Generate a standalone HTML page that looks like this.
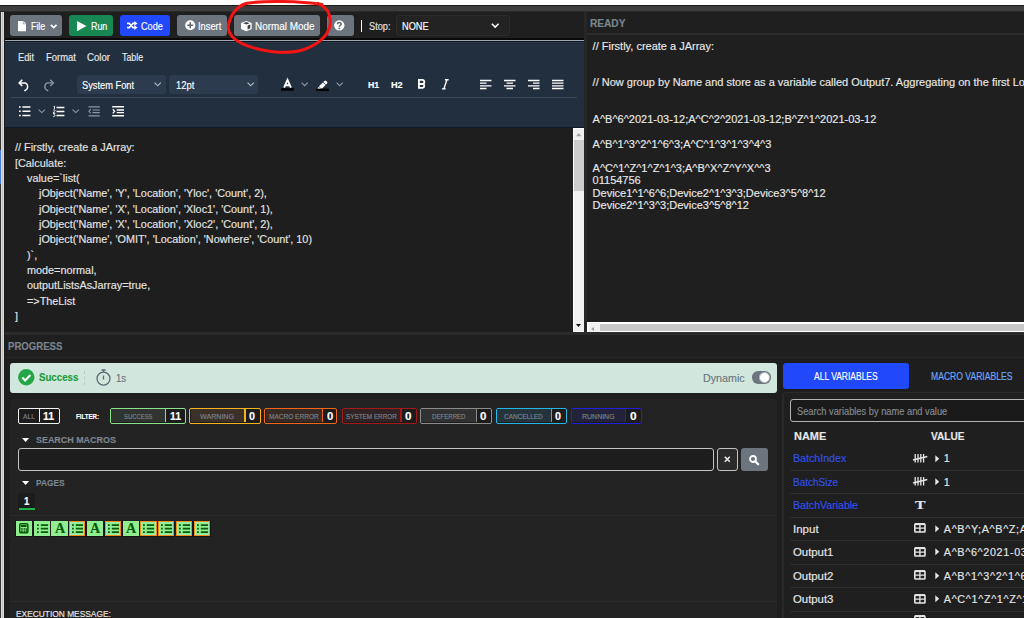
<!DOCTYPE html>
<html><head><meta charset="utf-8">
<style>
*{box-sizing:border-box;margin:0;padding:0}
html,body{width:1024px;height:618px;overflow:hidden;background:#1e1e1e;font-family:"Liberation Sans",sans-serif;color:#fff;position:relative}
.a{position:absolute}
.t{position:absolute;white-space:pre;line-height:1;-webkit-text-stroke:0.15px currentColor}
svg{display:block;overflow:visible}
</style></head><body>
<div class="a" style="left:0px;top:0px;width:1024px;height:5px;background:#fff;"></div>
<div class="a" style="left:0px;top:5px;width:1024px;height:1px;background:#1c1c1c;"></div>
<div class="a" style="left:0px;top:6px;width:1024px;height:5px;background:#3e3e3e;"></div>
<div class="a" style="left:0px;top:11px;width:1024px;height:1px;background:#2a2a2a;"></div>
<div class="a" style="left:0px;top:12px;width:1px;height:606px;background:#333;"></div>
<div class="a" style="left:1px;top:12px;width:1px;height:606px;background:#dcdcdc;"></div>
<div class="a" style="left:2px;top:12px;width:1px;height:606px;background:#c2c2c2;"></div>
<div class="a" style="left:3px;top:12px;width:1px;height:606px;background:#dcdcdc;"></div>
<div class="a" style="left:4px;top:12px;width:1px;height:606px;background:#1a1a1a;"></div>
<div class="a" style="left:0px;top:150px;width:1px;height:34px;background:#4a7ae8;"></div>
<div class="a" style="left:5px;top:12px;width:579px;height:26px;background:#1f1f1f;"></div>
<div class="a" style="left:5px;top:38px;width:579px;height:1.5px;background:#0a0a0a;"></div>
<div class="a" style="left:5px;top:39.5px;width:579px;height:1.5px;background:#9ea6ae;"></div>
<div class="a" style="left:5px;top:41px;width:579px;height:1px;background:#0b1322;"></div>
<div class="a" style="left:10px;top:15px;width:51.5px;height:21px;background:#6c757d;border-radius:3px"></div>
<svg class="a" style="left:18px;top:20.8px;" width="8" height="10.2" viewBox="0 0 8 10.2"><path d="M0 0H5.4L8 2.6V10.2H0Z" fill="#fff"/><path d="M5.2 0.3V2.8H7.7" fill="none" stroke="#8a9299" stroke-width="0.8"/></svg>
<div class="t" style="left:30.80px;top:22.00px;font-size:10.3px;color:#fff;transform:scaleX(0.856);transform-origin:0 0;">File</div>
<svg class="a" style="left:49.8px;top:23.6px;" width="7.4" height="4.6" viewBox="0 0 7.4 4.6"><path d="M0.9 0.9L3.7 3.6L6.5 0.9" stroke="#fff" stroke-width="1.8" fill="none"/></svg>
<div class="a" style="left:69px;top:15px;width:44px;height:21px;background:#198754;border-radius:3px"></div>
<svg class="a" style="left:77px;top:20.9px;" width="9.5" height="10.2" viewBox="0 0 9.5 10.2"><path d="M0 0L9.5 5.1L0 10.2Z" fill="#fff"/></svg>
<div class="t" style="left:90.80px;top:22.00px;font-size:10.3px;color:#fff;transform:scaleX(0.863);transform-origin:0 0;">Run</div>
<div class="a" style="left:120px;top:15px;width:49.5px;height:21px;background:#2148fb;border-radius:3px"></div>
<svg class="a" style="left:126.8px;top:21px;" width="10.6" height="9" viewBox="0 0 10.6 9"><path d="M0 2.4H2.2L6 6.6H7.8M0 6.6H2.2L6 2.4H7.8" stroke="#fff" stroke-width="1.6" fill="none"/><path d="M7.3 0L10.6 2.4L7.3 4.8ZM7.3 4.2L10.6 6.6L7.3 9Z" fill="#fff"/></svg>
<div class="t" style="left:141.10px;top:22.00px;font-size:10.3px;color:#fff;transform:scaleX(0.890);transform-origin:0 0;">Code</div>
<div class="a" style="left:176.5px;top:15px;width:50.5px;height:21px;background:#6c757d;border-radius:3px"></div>
<svg class="a" style="left:184.5px;top:20.2px;" width="10.5" height="10.5" viewBox="0 0 10.5 10.5"><circle cx="5.25" cy="5.25" r="5.1" fill="#fff"/><path d="M5.25 2.3V8.2M2.3 5.25H8.2" stroke="#5d666e" stroke-width="1.5"/></svg>
<div class="t" style="left:197.70px;top:22.00px;font-size:10.3px;color:#fff;transform:scaleX(0.901);transform-origin:0 0;">Insert</div>
<div class="a" style="left:234px;top:15px;width:86px;height:21px;background:#6c757d;border-radius:3px"></div>
<svg class="a" style="left:240.7px;top:20.6px;" width="10.7" height="10.2" viewBox="0 0 10.7 10.2"><path d="M5.35 0L10.7 2.1V8L5.35 10.2L0 8V2.1Z" fill="#fff"/><path d="M2.2 2.3L5.35 1.1L8.5 2.3L5.35 3.5Z" fill="#3a4148"/><path d="M6.6 4.6L9.3 3.5V7.2L6.6 8.4Z" fill="#3a4148"/></svg>
<div class="t" style="left:254.90px;top:22.00px;font-size:10.3px;color:#fff;transform:scaleX(0.961);transform-origin:0 0;">Normal Mode</div>
<div class="a" style="left:327px;top:15px;width:27px;height:21px;background:#6c757d;border-radius:3px"></div>
<svg class="a" style="left:333.8px;top:20.2px;" width="10.6" height="10.6" viewBox="0 0 10.5 10.5"><circle cx="5.25" cy="5.25" r="5.1" fill="#fff"/><path d="M3.4 4.1C3.4 2.1 7.1 2.1 7.1 4C7.1 5.3 5.25 5.3 5.25 6.6" stroke="#5d666e" stroke-width="1.5" fill="none"/><circle cx="5.25" cy="8.3" r="0.9" fill="#5d666e"/></svg>
<div class="a" style="left:361px;top:20px;width:1.3px;height:11.5px;background:#f4f4f4;"></div>
<div class="t" style="left:368.80px;top:22.00px;font-size:10.3px;color:#e6e6e6;transform:scaleX(0.894);transform-origin:0 0;">Stop:</div>
<div class="a" style="left:396px;top:15.3px;width:114px;height:21px;background:#232323;border-radius:3px;border:1px solid #2c2c2c"></div>
<div class="t" style="left:402.20px;top:22.00px;font-size:10.3px;color:#fff;transform:scaleX(0.894);transform-origin:0 0;">NONE</div>
<svg class="a" style="left:491px;top:23.3px;" width="8.4" height="5" viewBox="0 0 8.4 5"><path d="M0.8 0.8L4.2 4.1L7.6 0.8" stroke="#fff" stroke-width="1.5" fill="none"/></svg>
<div class="a" style="left:5px;top:42px;width:579px;height:85px;background:#222f3e;"></div>
<div class="a" style="left:5px;top:42px;width:579px;height:1px;background:#2a3746;"></div>
<div class="t" style="left:17.90px;top:53.00px;font-size:10.4px;color:#e8eaed;transform:scaleX(0.894);transform-origin:0 0;">Edit</div>
<div class="t" style="left:45.80px;top:53.00px;font-size:10.4px;color:#e8eaed;transform:scaleX(0.909);transform-origin:0 0;">Format</div>
<div class="t" style="left:87.30px;top:53.00px;font-size:10.4px;color:#e8eaed;transform:scaleX(0.926);transform-origin:0 0;">Color</div>
<div class="t" style="left:122.20px;top:53.00px;font-size:10.4px;color:#e8eaed;transform:scaleX(0.853);transform-origin:0 0;">Table</div>
<svg class="a" style="left:17.5px;top:78.5px;" width="12.5" height="12.2" viewBox="0 0 12.5 12.2"><path d="M4.3 0.7L1.1 3.9L4.3 7.1" stroke="#fff" stroke-width="1.5" fill="none"/><path d="M1.3 3.9H7.3A4.2 4.2 0 0 1 7.3 11.5H6.2" stroke="#fff" stroke-width="1.5" fill="none"/></svg>
<svg class="a" style="left:42.3px;top:78.5px;" width="12.5" height="12.2" viewBox="0 0 12.5 12.2"><path d="M8.2 0.7L11.4 3.9L8.2 7.1" stroke="#8f98a2" stroke-width="1.4" fill="none"/><path d="M11.2 3.9H5.2A4.2 4.2 0 0 0 5.2 11.5H6.3" stroke="#8f98a2" stroke-width="1.4" fill="none"/></svg>
<div class="a" style="left:77px;top:74.8px;width:89px;height:19px;background:#2c3b4d;border-radius:3px"></div>
<div class="t" style="left:82.10px;top:81.00px;font-size:10.3px;color:#fff;transform:scaleX(0.900);transform-origin:0 0;">System Font</div>
<svg class="a" style="left:154px;top:82.2px;" width="7.4" height="4.6" viewBox="0 0 7.4 4.6"><path d="M0.6 0.6L3.7 3.8L6.8 0.6" stroke="#b9c0c7" stroke-width="1.1" fill="none"/></svg>
<div class="a" style="left:169.3px;top:74.8px;width:89px;height:19px;background:#2c3b4d;border-radius:3px"></div>
<div class="t" style="left:175.70px;top:81.00px;font-size:10.3px;color:#fff;transform:scaleX(0.913);transform-origin:0 0;">12pt</div>
<svg class="a" style="left:246.5px;top:82.2px;" width="7.4" height="4.6" viewBox="0 0 7.4 4.6"><path d="M0.6 0.6L3.7 3.8L6.8 0.6" stroke="#b9c0c7" stroke-width="1.1" fill="none"/></svg>
<svg class="a" style="left:281px;top:79px;" width="13" height="12" viewBox="0 0 13 12"><path d="M3.1 8.6L6.5 0.9L9.9 8.6M4.5 6.2H8.5" stroke="#fff" stroke-width="1.9" fill="none"/><rect x="0" y="9.2" width="12.7" height="2.5" fill="#000"/></svg>
<svg class="a" style="left:301px;top:82px;" width="7.4" height="4.5" viewBox="0 0 7.4 4.5"><path d="M0.6 0.6L3.7 3.7L6.8 0.6" stroke="#8d99a6" stroke-width="1.1" fill="none"/></svg>
<svg class="a" style="left:316px;top:78.5px;" width="13" height="12.3" viewBox="0 0 13 12.3"><path d="M3 7.3L8.4 1.9A1.3 1.3 0 0 1 10.2 1.9L11 2.7A1.3 1.3 0 0 1 11 4.5L5.6 9.9Z" fill="#fff"/><path d="M7.2 3.2L9.8 5.8" stroke="#222f3e" stroke-width="0.8"/><path d="M2.8 7.8L5.1 10.1L3.8 10.6H0.8Z" fill="#fff"/><rect x="0.2" y="9.6" width="12.6" height="2.5" fill="#000"/></svg>
<svg class="a" style="left:336px;top:82px;" width="7.4" height="4.5" viewBox="0 0 7.4 4.5"><path d="M0.6 0.6L3.7 3.7L6.8 0.6" stroke="#8d99a6" stroke-width="1.1" fill="none"/></svg>
<div class="t" style="left:367.80px;top:80.00px;font-size:9.9px;font-weight:bold;color:#fff;transform:scaleX(0.887);transform-origin:0 0;">H1</div>
<div class="t" style="left:391.30px;top:80.00px;font-size:9.9px;font-weight:bold;color:#fff;transform:scaleX(0.927);transform-origin:0 0;">H2</div>
<svg class="a" style="left:417.5px;top:79.4px;" width="8.2" height="9.7" viewBox="0 0 8.2 9.7"><path d="M0.9 0.9H4.3A2.05 2.05 0 0 1 4.3 5H0.9ZM0.9 4.8H4.7A2.05 2.05 0 0 1 4.7 8.8H0.9Z" stroke="#fff" stroke-width="1.8" fill="none"/></svg>
<svg class="a" style="left:442px;top:79px;" width="6.6" height="10.6" viewBox="0 0 6.6 10.6"><path d="M2.9 0.7H6.6M0 9.9H3.7M4.9 0.7L1.9 9.9" stroke="#fff" stroke-width="1.4" fill="none"/></svg>
<svg class="a" style="left:479.7px;top:79px;" width="11.5" height="11" viewBox="0 0 11.5 11"><path d="M0 1.5H11.5M0 6.8H11.5M0 4.2H6.5M0 9.5H6.5" stroke="#fff" stroke-width="1.3"/></svg>
<svg class="a" style="left:503.8px;top:79px;" width="11.5" height="11" viewBox="0 0 11.5 11"><path d="M0 1.5H11.5M0 6.8H11.5M2.5 4.2H9M2.5 9.5H9" stroke="#fff" stroke-width="1.3"/></svg>
<svg class="a" style="left:527.9px;top:79px;" width="11.5" height="11" viewBox="0 0 11.5 11"><path d="M0 1.5H11.5M0 6.8H11.5M5 4.2H11.5M5 9.5H11.5" stroke="#fff" stroke-width="1.3"/></svg>
<svg class="a" style="left:552px;top:79px;" width="11.5" height="11" viewBox="0 0 11.5 11"><path d="M0 1.5H11.5M0 6.8H11.5M0 4.2H11.5M0 9.5H11.5" stroke="#fff" stroke-width="1.3"/></svg>
<div class="a" style="left:11px;top:96.6px;width:566px;height:1px;background:#3b4a5a;"></div>
<svg class="a" style="left:18.6px;top:105.8px;" width="11.4" height="10.5" viewBox="0 0 11.4 10.5"><path d="M0 1H1.7M0 5.25H1.7M0 9.5H1.7" stroke="#fff" stroke-width="1.7"/><path d="M3.4 1H11.4M3.4 5.25H11.4M3.4 9.5H11.4" stroke="#fff" stroke-width="1.4"/></svg>
<svg class="a" style="left:37.5px;top:109.3px;" width="7.6" height="4.3" viewBox="0 0 7.6 4.3"><path d="M0.6 0.6L3.8 3.6L7 0.6" stroke="#8d99a6" stroke-width="1.1" fill="none"/></svg>
<svg class="a" style="left:52.9px;top:105.5px;" width="11.4" height="11" viewBox="0 0 11.4 11"><path d="M0.7 0.5L1.5 0.1V3M0.2 4.3C0.5 3.6 2 3.6 2 4.5C2 5.2 0.6 5.8 0.2 6.9H2.1M0.2 7.6H2L1 8.7C2.4 8.6 2.4 10.8 0.2 10.5" stroke="#fff" stroke-width="0.9" fill="none"/><path d="M3.5 1.4H11.4M3.5 5.5H11.4M3.5 9.6H11.4" stroke="#fff" stroke-width="1.5"/></svg>
<svg class="a" style="left:72.3px;top:109.3px;" width="7.6" height="4.3" viewBox="0 0 7.6 4.3"><path d="M0.6 0.6L3.8 3.6L7 0.6" stroke="#8d99a6" stroke-width="1.1" fill="none"/></svg>
<svg class="a" style="left:88px;top:105.8px;" width="11.8" height="10.5" viewBox="0 0 11.8 10.5"><path d="M0.5 0.8H11.8M4.5 4H11.8M4.5 6.6H11.8M0.5 9.8H11.8" stroke="#8f98a2" stroke-width="1.2"/><path d="M2.8 3.2L0.9 5.3L2.8 7.4" stroke="#8f98a2" stroke-width="1.1" fill="none"/></svg>
<svg class="a" style="left:111.6px;top:105.8px;" width="12" height="10.5" viewBox="0 0 12 10.5"><path d="M0.2 0.8H12M4.7 4H12M4.7 6.6H12M0.2 9.8H12" stroke="#fff" stroke-width="1.4"/><path d="M0.8 3.2L2.7 5.3L0.8 7.4" stroke="#fff" stroke-width="1.3" fill="none"/></svg>
<div class="a" style="left:5px;top:127px;width:579px;height:1.2px;background:#111a24;"></div>
<div class="t" style="left:15.00px;top:142.00px;font-size:11px;color:#e4e4e4;transform:scaleX(0.985);transform-origin:0 0;">// Firstly, create a JArray:</div>
<div class="t" style="left:15.00px;top:158.00px;font-size:11px;color:#e4e4e4;transform:scaleX(0.985);transform-origin:0 0;">[Calculate:</div>
<div class="t" style="left:27.00px;top:173.00px;font-size:11px;color:#e4e4e4;transform:scaleX(0.985);transform-origin:0 0;">value=`list(</div>
<div class="t" style="left:39.00px;top:188.00px;font-size:11px;color:#e4e4e4;transform:scaleX(0.985);transform-origin:0 0;">jObject('Name', 'Y', 'Location', 'Yloc', 'Count', 2),</div>
<div class="t" style="left:39.00px;top:204.00px;font-size:11px;color:#e4e4e4;transform:scaleX(0.985);transform-origin:0 0;">jObject('Name', 'X', 'Location', 'Xloc1', 'Count', 1),</div>
<div class="t" style="left:39.00px;top:219.00px;font-size:11px;color:#e4e4e4;transform:scaleX(0.985);transform-origin:0 0;">jObject('Name', 'X', 'Location', 'Xloc2', 'Count', 2),</div>
<div class="t" style="left:39.00px;top:234.00px;font-size:11px;color:#e4e4e4;transform:scaleX(0.985);transform-origin:0 0;">jObject('Name', 'OMIT', 'Location', 'Nowhere', 'Count', 10)</div>
<div class="t" style="left:27.00px;top:250.00px;font-size:11px;color:#e4e4e4;transform:scaleX(0.985);transform-origin:0 0;">)`,</div>
<div class="t" style="left:27.00px;top:265.00px;font-size:11px;color:#e4e4e4;transform:scaleX(0.985);transform-origin:0 0;">mode=normal,</div>
<div class="t" style="left:27.00px;top:280.00px;font-size:11px;color:#e4e4e4;transform:scaleX(0.985);transform-origin:0 0;">outputListsAsJarray=true,</div>
<div class="t" style="left:27.00px;top:296.00px;font-size:11px;color:#e4e4e4;transform:scaleX(0.985);transform-origin:0 0;">=&gt;TheList</div>
<div class="t" style="left:15.00px;top:311.00px;font-size:11px;color:#e4e4e4;transform:scaleX(0.985);transform-origin:0 0;">]</div>
<div class="a" style="left:572.8px;top:128px;width:11.4px;height:204px;background:#fff;"></div>
<div class="a" style="left:574px;top:129px;width:9.5px;height:202px;background:#f0f0f0;"></div>
<div class="a" style="left:574px;top:140px;width:9.5px;height:50.5px;background:#cdcdcd;"></div>
<svg class="a" style="left:575.8px;top:132.5px;" width="5.5" height="3.2" viewBox="0 0 5.5 3.2"><path d="M0 3.2L2.75 0L5.5 3.2Z" fill="#a3a3a3"/></svg>
<svg class="a" style="left:576px;top:324px;" width="5" height="3" viewBox="0 0 5 3"><path d="M0 0L2.5 3L5 0Z" fill="#111"/></svg>
<div class="a" style="left:584px;top:12px;width:3px;height:320px;background:#272727;"></div>
<div class="a" style="left:587px;top:12px;width:437px;height:20.5px;background:#1f1f1f;"></div>
<div class="t" style="left:589.60px;top:18.00px;font-size:10.8px;font-weight:bold;color:#7c858f;transform:scaleX(0.937);transform-origin:0 0;">READY</div>
<div class="a" style="left:587px;top:32.5px;width:437px;height:2px;background:#2b2b2b;"></div>
<div class="a" style="left:587px;top:34.5px;width:437px;height:288px;background:#1f1f1f;"></div>
<div class="t" style="left:592.60px;top:41.00px;font-size:11px;color:#e8e8e8;">// Firstly, create a JArray:</div>
<div class="t" style="left:592.60px;top:77.00px;font-size:11px;color:#e8e8e8;">// Now group by Name and store as a variable called Output7. Aggregating on the first Location</div>
<div class="t" style="left:592.60px;top:114.00px;font-size:11px;color:#e8e8e8;">A^B^6^2021-03-12;A^C^2^2021-03-12;B^Z^1^2021-03-12</div>
<div class="t" style="left:592.60px;top:139.00px;font-size:11px;color:#e8e8e8;">A^B^1^3^2^1^6^3;A^C^1^3^1^3^4^3</div>
<div class="t" style="left:592.60px;top:163.00px;font-size:11px;color:#e8e8e8;">A^C^1^Z^1^Z^1^3;A^B^X^Z^Y^X^^3</div>
<div class="t" style="left:592.60px;top:175.00px;font-size:11px;color:#e8e8e8;">01154756</div>
<div class="t" style="left:592.60px;top:188.00px;font-size:11px;color:#e8e8e8;">Device1^1^6^6;Device2^1^3^3;Device3^5^8^12</div>
<div class="t" style="left:592.60px;top:200.00px;font-size:11px;color:#e8e8e8;">Device2^1^3^3;Device3^5^8^12</div>
<div class="a" style="left:587px;top:322px;width:437px;height:10px;background:#fff;"></div>
<div class="a" style="left:588.5px;top:323px;width:11px;height:9px;background:#f0f0f0;"></div>
<div class="a" style="left:599.5px;top:324px;width:425px;height:7px;background:#c8c8c8;"></div>
<svg class="a" style="left:591.2px;top:326.5px;" width="3" height="4" viewBox="0 0 3 4"><path d="M3 0L0 2L3 4Z" fill="#a0a0a0"/></svg>
<div class="a" style="left:5px;top:332px;width:1019px;height:3px;background:#2b2b2b;"></div>
<div class="a" style="left:5px;top:335px;width:1019px;height:22px;background:#1f1f1f;"></div>
<div class="t" style="left:7.50px;top:341.00px;font-size:10.9px;font-weight:bold;color:#7c858f;transform:scaleX(0.881);transform-origin:0 0;">PROGRESS</div>
<div class="a" style="left:5px;top:356.8px;width:1019px;height:1.4px;background:#262626;"></div>
<div class="a" style="left:10px;top:363px;width:767.2px;height:30.3px;background:#d1e7dd;border-radius:3px"></div>
<svg class="a" style="left:18px;top:369.2px;" width="16.6" height="16.6" viewBox="0 0 16.6 16.6"><circle cx="8.3" cy="8.3" r="8.2" fill="#23a645"/><path d="M4.3 8.6L7.1 11.4L12.4 6" stroke="#fff" stroke-width="2.1" fill="none"/></svg>
<div class="t" style="left:39.00px;top:373.00px;font-size:10.2px;font-weight:bold;color:#1b9b3c;transform:scaleX(0.950);transform-origin:0 0;">Success</div>
<div class="a" style="left:83.5px;top:371px;width:0px;height:13.5px;background:transparent;border-left:1px dashed #b9cbc2"></div>
<svg class="a" style="left:95.8px;top:369px;" width="15" height="16.8" viewBox="0 0 15 16.8"><circle cx="7.5" cy="9.6" r="6.5" stroke="#5d6873" stroke-width="1.3" fill="none"/><path d="M7.5 6.5V10.5M5.5 1H9.5M7.5 1V3" stroke="#5d6873" stroke-width="1.3"/></svg>
<div class="t" style="left:115.90px;top:374.00px;font-size:10.4px;color:#6c757d;transform:scaleX(0.929);transform-origin:0 0;">1s</div>
<div class="t" style="left:703.40px;top:373.00px;font-size:10.6px;color:#6c757d;transform:scaleX(1.010);transform-origin:0 0;">Dynamic</div>
<div class="a" style="left:751.5px;top:371.4px;width:19px;height:12.3px;background:#6c757d;border-radius:6.2px"></div>
<div class="a" style="left:759px;top:372.2px;width:11px;height:10.7px;background:#fff;border-radius:50%;border:1.2px solid #aeb4ba"></div>
<div class="a" style="left:782.8px;top:363px;width:126.2px;height:25.5px;background:#2148fb;border-radius:3px"></div>
<div class="t" style="left:814.00px;top:372.00px;font-size:10.2px;color:#fff;transform:scaleX(0.833);transform-origin:0 0;">ALL VARIABLES</div>
<div class="t" style="left:931.30px;top:372.00px;font-size:10.2px;color:#6ea8fe;transform:scaleX(0.843);transform-origin:0 0;">MACRO VARIABLES</div>
<div class="a" style="left:10px;top:398.8px;width:767px;height:230px;background:#232323;border-top-left-radius:3px;border-top-right-radius:3px"></div>
<div class="a" style="left:782.3px;top:392.3px;width:260px;height:240px;background:#1f1f1f;border:1px solid #2a2a2a;border-left:2.2px solid #282828;border-top-left-radius:4px"></div>
<div class="a" style="left:18.3px;top:407.8px;width:41.8px;height:16.3px;background:#1c1c1c;border:1.6px solid #f2f2f2;border-radius:2px"></div><div class="a" style="left:19.900000000000002px;top:409.4px;width:19.3px;height:13.1px;background:#1c1c1c;"></div><div class="a" style="left:39.2px;top:409.4px;width:1.3px;height:13.1px;background:#f2f2f2;"></div><div class="t" style="left:23.00px;top:413.00px;font-size:8px;color:#7d858d;transform:scaleX(0.843);transform-origin:0 0;">ALL</div><div class="t" style="left:43.40px;top:411.00px;font-size:11.3px;font-weight:bold;color:#fff;transform:scaleX(0.929);transform-origin:0 0;">11</div>
<div class="t" style="left:75.90px;top:413.00px;font-size:7.6px;font-weight:bold;color:#fff;transform:scaleX(0.809);transform-origin:0 0;">FILTER:</div>
<div class="a" style="left:109.8px;top:407.8px;width:76.2px;height:16.3px;background:#1c1c1c;border:1.6px solid #8be28b;border-radius:2px"></div><div class="a" style="left:111.39999999999999px;top:409.4px;width:53.199999999999996px;height:13.1px;background:#2f3430;"></div><div class="a" style="left:164.6px;top:409.4px;width:1.3px;height:13.1px;background:#8be28b;"></div><div class="t" style="left:123.50px;top:413.00px;font-size:8px;color:#7d858d;transform:scaleX(0.737);transform-origin:0 0;">SUCCESS</div><div class="t" style="left:169.60px;top:411.00px;font-size:11.3px;font-weight:bold;color:#fff;transform:scaleX(0.921);transform-origin:0 0;">11</div>
<div class="a" style="left:188.9px;top:407.8px;width:72px;height:16.3px;background:#1c1c1c;border:1.6px solid #f7b21c;border-radius:2px"></div><div class="a" style="left:190.5px;top:409.4px;width:53.9px;height:13.1px;background:#3b3129;"></div><div class="a" style="left:244.4px;top:409.4px;width:1.3px;height:13.1px;background:#f7b21c;"></div><div class="t" style="left:199.90px;top:413.00px;font-size:8px;color:#7d858d;transform:scaleX(0.886);transform-origin:0 0;">WARNING</div><div class="t" style="left:249.10px;top:411.00px;font-size:11.3px;font-weight:bold;color:#fff;transform:scaleX(0.955);transform-origin:0 0;">0</div>
<div class="a" style="left:263.9px;top:407.8px;width:73.6px;height:16.3px;background:#1c1c1c;border:1.6px solid #f2661c;border-radius:2px"></div><div class="a" style="left:265.5px;top:409.4px;width:56.30000000000003px;height:13.1px;background:#382a24;"></div><div class="a" style="left:321.8px;top:409.4px;width:1.3px;height:13.1px;background:#f2661c;"></div><div class="t" style="left:268.60px;top:413.00px;font-size:8px;color:#7d858d;transform:scaleX(0.816);transform-origin:0 0;">MACRO ERROR</div><div class="t" style="left:326.50px;top:411.00px;font-size:11.3px;font-weight:bold;color:#fff;transform:scaleX(1.003);transform-origin:0 0;">0</div>
<div class="a" style="left:342.2px;top:407.8px;width:74.5px;height:16.3px;background:#1c1c1c;border:1.6px solid #a51818;border-radius:2px"></div><div class="a" style="left:343.8px;top:409.4px;width:56.50000000000002px;height:13.1px;background:#312323;"></div><div class="a" style="left:400.3px;top:409.4px;width:1.3px;height:13.1px;background:#a51818;"></div><div class="t" style="left:346.00px;top:413.00px;font-size:8px;color:#7d858d;transform:scaleX(0.794);transform-origin:0 0;">SYSTEM ERROR</div><div class="t" style="left:405.00px;top:411.00px;font-size:11.3px;font-weight:bold;color:#fff;transform:scaleX(1.035);transform-origin:0 0;">0</div>
<div class="a" style="left:419.8px;top:407.8px;width:72.2px;height:16.3px;background:#1c1c1c;border:1.6px solid #8c8c8c;border-radius:2px"></div><div class="a" style="left:421.40000000000003px;top:409.4px;width:54.20000000000001px;height:13.1px;background:#313131;"></div><div class="a" style="left:475.6px;top:409.4px;width:1.3px;height:13.1px;background:#8c8c8c;"></div><div class="t" style="left:431.60px;top:413.00px;font-size:8px;color:#7d858d;transform:scaleX(0.761);transform-origin:0 0;">DEFERRED</div><div class="t" style="left:479.80px;top:411.00px;font-size:11.3px;font-weight:bold;color:#fff;transform:scaleX(1.019);transform-origin:0 0;">0</div>
<div class="a" style="left:495.5px;top:407.8px;width:71.5px;height:16.3px;background:#1c1c1c;border:1.6px solid #22b5e8;border-radius:2px"></div><div class="a" style="left:497.1px;top:409.4px;width:53.50000000000002px;height:13.1px;background:#25333a;"></div><div class="a" style="left:550.6px;top:409.4px;width:1.3px;height:13.1px;background:#22b5e8;"></div><div class="t" style="left:503.70px;top:413.00px;font-size:8px;color:#7d858d;transform:scaleX(0.806);transform-origin:0 0;">CANCELLED</div><div class="t" style="left:555.30px;top:411.00px;font-size:11.3px;font-weight:bold;color:#fff;transform:scaleX(0.955);transform-origin:0 0;">0</div>
<div class="a" style="left:570.5px;top:407.8px;width:71.5px;height:16.3px;background:#1c1c1c;border:1.6px solid #2020dc;border-radius:2px"></div><div class="a" style="left:572.1px;top:409.4px;width:52.9px;height:13.1px;background:#22233a;"></div><div class="a" style="left:625px;top:409.4px;width:1.3px;height:13.1px;background:#2020dc;"></div><div class="t" style="left:581.80px;top:413.00px;font-size:8px;color:#7d858d;transform:scaleX(0.873);transform-origin:0 0;">RUNNING</div><div class="t" style="left:630.30px;top:411.00px;font-size:11.3px;font-weight:bold;color:#fff;transform:scaleX(1.050);transform-origin:0 0;">0</div>
<svg class="a" style="left:21.9px;top:438.1px;" width="7.2" height="4" viewBox="0 0 7.2 4"><path d="M0 0H7.2L3.6 4Z" fill="#fff"/></svg>
<div class="t" style="left:35.60px;top:435.00px;font-size:9.8px;font-weight:bold;color:#7c858f;transform:scaleX(0.911);transform-origin:0 0;">SEARCH MACROS</div>
<div class="a" style="left:18.2px;top:448.2px;width:695.8px;height:22.6px;background:#1d1d1d;border:1.5px solid #c4c4c4;border-radius:3px"></div>
<div class="a" style="left:717.1px;top:448.2px;width:21px;height:22.6px;background:#2b2b2b;border:1.5px solid #c4c4c4;border-radius:3px"></div>
<svg class="a" style="left:724.4px;top:456.2px;" width="6.6" height="6.6" viewBox="0 0 6.6 6.6"><path d="M0.8 0.8L5.8 5.8M5.8 0.8L0.8 5.8" stroke="#e8e8e8" stroke-width="1.6"/></svg>
<div class="a" style="left:741.3px;top:448.2px;width:27px;height:22.6px;background:#6c757d;border-radius:3px"></div>
<svg class="a" style="left:748.8px;top:454.5px;" width="10" height="10" viewBox="0 0 10 10"><circle cx="4" cy="4" r="3" stroke="#fff" stroke-width="1.8" fill="none"/><path d="M6.2 6.2L9.2 9.2" stroke="#fff" stroke-width="2.1" stroke-linecap="round"/></svg>
<svg class="a" style="left:21.9px;top:480.6px;" width="7.2" height="4" viewBox="0 0 7.2 4"><path d="M0 0H7.2L3.6 4Z" fill="#fff"/></svg>
<div class="t" style="left:35.60px;top:478.00px;font-size:9.8px;font-weight:bold;color:#7c858f;transform:scaleX(0.855);transform-origin:0 0;">PAGES</div>
<div class="a" style="left:18.4px;top:493.3px;width:17px;height:16.5px;background:#1c1c1c;border-radius:3px 3px 0 0"></div>
<div class="t" style="left:24.30px;top:497.00px;font-size:10.4px;font-weight:bold;color:#fff;transform:scaleX(0.917);transform-origin:0 0;">1</div>
<div class="a" style="left:18.8px;top:507.9px;width:16.4px;height:1.9px;background:#20b24c;"></div>
<div class="a" style="left:10px;top:515.2px;width:767px;height:1px;background:#2a2a2a;"></div>
<div class="a" style="left:15.1px;top:520.5px;width:17.4px;height:16.2px;background:#141414;"></div>
<div class="a" style="left:15.7px;top:521.1px;width:16.2px;height:15px;background:#90ee90;"></div>
<svg class="a" style="left:19.3px;top:523.2px;" width="9.6" height="10.6" viewBox="0 0 9.6 10.6"><rect x="0.75" y="0.75" width="8.1" height="9.1" rx="1.2" stroke="#0a5a0a" stroke-width="1.5" fill="none"/><rect x="2" y="2" width="5.6" height="2" fill="#0a5a0a"/><rect x="2.1" y="5.2" width="1.7" height="1.5" fill="#0a5a0a"/><rect x="4.6" y="5.2" width="1.7" height="1.5" fill="#0a5a0a"/><rect x="2.1" y="7.5" width="1.7" height="1.5" fill="#0a5a0a"/><rect x="4.6" y="7.5" width="1.7" height="1.5" fill="#0a5a0a"/><rect x="6.8" y="5.2" width="1" height="3.8" fill="#0a5a0a"/></svg>
<div class="a" style="left:33.0px;top:520.5px;width:17.4px;height:16.2px;background:#141414;"></div>
<div class="a" style="left:33.6px;top:521.1px;width:16.2px;height:15px;background:#90ee90;"></div>
<svg class="a" style="left:36.6px;top:523.5px;" width="11.1" height="9.5" viewBox="0 0 11.1 9.5"><path d="M0 1.1H1.8M0 4.6H1.8M0 8.1H1.8" stroke="#0a5a0a" stroke-width="1.8"/><path d="M3.8 1.1H11.1M3.8 4.6H11.1M3.8 8.1H11.1" stroke="#0a5a0a" stroke-width="1.7"/></svg>
<div class="a" style="left:50.8px;top:520.5px;width:17.4px;height:16.2px;background:#141414;"></div>
<div class="a" style="left:51.4px;top:521.1px;width:16.2px;height:15px;background:#90ee90;"></div>
<div class="t" style="left:54.50px;top:522.00px;font-size:13.8px;font-weight:bold;font-family:'Liberation Serif',serif;color:#0a5a0a;transform:scaleX(1.024);transform-origin:0 0;">A</div>
<div class="a" style="left:68.4px;top:520.5px;width:17.4px;height:16.2px;background:#141414;"></div>
<div class="a" style="left:69px;top:521.1px;width:16.2px;height:15px;background:#90ee90;"></div>
<div class="a" style="left:69px;top:521.1px;width:16.2px;height:15px;background:transparent;border:1px solid #f08c1a;box-shadow:inset 0 0 0 0.6px #9ff0c8"></div>
<svg class="a" style="left:72px;top:523.5px;" width="11.1" height="9.5" viewBox="0 0 11.1 9.5"><path d="M0 1.1H1.8M0 4.6H1.8M0 8.1H1.8" stroke="#0a5a0a" stroke-width="1.8"/><path d="M3.8 1.1H11.1M3.8 4.6H11.1M3.8 8.1H11.1" stroke="#0a5a0a" stroke-width="1.7"/></svg>
<div class="a" style="left:86.30000000000001px;top:520.5px;width:17.4px;height:16.2px;background:#141414;"></div>
<div class="a" style="left:86.9px;top:521.1px;width:16.2px;height:15px;background:#90ee90;"></div>
<div class="t" style="left:90.00px;top:522.00px;font-size:13.8px;font-weight:bold;font-family:'Liberation Serif',serif;color:#0a5a0a;transform:scaleX(1.024);transform-origin:0 0;">A</div>
<div class="a" style="left:104.10000000000001px;top:520.5px;width:17.4px;height:16.2px;background:#141414;"></div>
<div class="a" style="left:104.7px;top:521.1px;width:16.2px;height:15px;background:#90ee90;"></div>
<div class="a" style="left:104.7px;top:521.1px;width:16.2px;height:15px;background:transparent;border:1px solid #f08c1a;box-shadow:inset 0 0 0 0.6px #9ff0c8"></div>
<svg class="a" style="left:107.7px;top:523.5px;" width="11.1" height="9.5" viewBox="0 0 11.1 9.5"><path d="M0 1.1H1.8M0 4.6H1.8M0 8.1H1.8" stroke="#0a5a0a" stroke-width="1.8"/><path d="M3.8 1.1H11.1M3.8 4.6H11.1M3.8 8.1H11.1" stroke="#0a5a0a" stroke-width="1.7"/></svg>
<div class="a" style="left:122.2px;top:520.5px;width:17.4px;height:16.2px;background:#141414;"></div>
<div class="a" style="left:122.8px;top:521.1px;width:16.2px;height:15px;background:#90ee90;"></div>
<div class="t" style="left:125.90px;top:522.00px;font-size:13.8px;font-weight:bold;font-family:'Liberation Serif',serif;color:#0a5a0a;transform:scaleX(1.024);transform-origin:0 0;">A</div>
<div class="a" style="left:139.8px;top:520.5px;width:17.4px;height:16.2px;background:#141414;"></div>
<div class="a" style="left:140.4px;top:521.1px;width:16.2px;height:15px;background:#90ee90;"></div>
<div class="a" style="left:140.4px;top:521.1px;width:16.2px;height:15px;background:transparent;border:1px solid #f08c1a;box-shadow:inset 0 0 0 0.6px #9ff0c8"></div>
<svg class="a" style="left:143.4px;top:523.5px;" width="11.1" height="9.5" viewBox="0 0 11.1 9.5"><path d="M0 1.1H1.8M0 4.6H1.8M0 8.1H1.8" stroke="#0a5a0a" stroke-width="1.8"/><path d="M3.8 1.1H11.1M3.8 4.6H11.1M3.8 8.1H11.1" stroke="#0a5a0a" stroke-width="1.7"/></svg>
<div class="a" style="left:157.70000000000002px;top:520.5px;width:17.4px;height:16.2px;background:#141414;"></div>
<div class="a" style="left:158.3px;top:521.1px;width:16.2px;height:15px;background:#90ee90;"></div>
<div class="a" style="left:158.3px;top:521.1px;width:16.2px;height:15px;background:transparent;border:1px solid #f08c1a;box-shadow:inset 0 0 0 0.6px #9ff0c8"></div>
<svg class="a" style="left:161.3px;top:523.5px;" width="11.1" height="9.5" viewBox="0 0 11.1 9.5"><path d="M0 1.1H1.8M0 4.6H1.8M0 8.1H1.8" stroke="#0a5a0a" stroke-width="1.8"/><path d="M3.8 1.1H11.1M3.8 4.6H11.1M3.8 8.1H11.1" stroke="#0a5a0a" stroke-width="1.7"/></svg>
<div class="a" style="left:175.5px;top:520.5px;width:17.4px;height:16.2px;background:#141414;"></div>
<div class="a" style="left:176.1px;top:521.1px;width:16.2px;height:15px;background:#90ee90;"></div>
<div class="a" style="left:176.1px;top:521.1px;width:16.2px;height:15px;background:transparent;border:1px solid #f08c1a;box-shadow:inset 0 0 0 0.6px #9ff0c8"></div>
<svg class="a" style="left:179.1px;top:523.5px;" width="11.1" height="9.5" viewBox="0 0 11.1 9.5"><path d="M0 1.1H1.8M0 4.6H1.8M0 8.1H1.8" stroke="#0a5a0a" stroke-width="1.8"/><path d="M3.8 1.1H11.1M3.8 4.6H11.1M3.8 8.1H11.1" stroke="#0a5a0a" stroke-width="1.7"/></svg>
<div class="a" style="left:193.4px;top:520.5px;width:17.4px;height:16.2px;background:#141414;"></div>
<div class="a" style="left:194px;top:521.1px;width:16.2px;height:15px;background:#90ee90;"></div>
<div class="a" style="left:194px;top:521.1px;width:16.2px;height:15px;background:transparent;border:1px solid #f08c1a;box-shadow:inset 0 0 0 0.6px #9ff0c8"></div>
<svg class="a" style="left:197px;top:523.5px;" width="11.1" height="9.5" viewBox="0 0 11.1 9.5"><path d="M0 1.1H1.8M0 4.6H1.8M0 8.1H1.8" stroke="#0a5a0a" stroke-width="1.8"/><path d="M3.8 1.1H11.1M3.8 4.6H11.1M3.8 8.1H11.1" stroke="#0a5a0a" stroke-width="1.7"/></svg>
<div class="a" style="left:10px;top:600.6px;width:767px;height:1px;background:#2c2c2c;"></div>
<div class="t" style="left:16.30px;top:609.00px;font-size:9.6px;color:#e8e8e8;transform:scaleX(0.872);transform-origin:0 0;">EXECUTION MESSAGE:</div>
<div class="a" style="left:790.1px;top:399.1px;width:240px;height:22.5px;background:#1a1a1a;border:1.3px solid #b4b4b4;border-radius:3px"></div>
<div class="t" style="left:796.80px;top:407.00px;font-size:10.3px;color:#868b90;transform:scaleX(0.902);transform-origin:0 0;">Search variables by name and value</div>
<div class="t" style="left:793.60px;top:431.00px;font-size:10.8px;font-weight:bold;color:#e8e8e8;transform:scaleX(1.013);transform-origin:0 0;">NAME</div>
<div class="t" style="left:930.80px;top:431.00px;font-size:10.8px;font-weight:bold;color:#e8e8e8;transform:scaleX(0.936);transform-origin:0 0;">VALUE</div>
<div class="a" style="left:789.9px;top:469.8px;width:240px;height:1px;background:#2e2e2e;"></div>
<div class="t" style="left:793.00px;top:453.00px;font-size:10.6px;color:#3450ea;transform:scaleX(1.004);transform-origin:0 0;">BatchIndex</div>
<svg class="a" style="left:913px;top:454.0px;" width="14.3" height="8.6" viewBox="0 0 14.3 8.6"><path d="M2.2 0V8.6M5 0V8.6M7.8 0V8.6M10.6 0V8.6" stroke="#e6e6e6" stroke-width="1.3"/><path d="M0 6L14.3 2.4" stroke="#e6e6e6" stroke-width="1.5"/></svg>
<svg class="a" style="left:934.6px;top:454.5px;" width="4.4" height="7.5" viewBox="0 0 4.4 7.5"><path d="M0.3 0.3L4.2 3.75L0.3 7.2Z" fill="#e6e6e6"/></svg>
<div class="t" style="left:943.80px;top:453.00px;font-size:10.8px;color:#e6e6e6;letter-spacing:0.65px">1</div>
<div class="a" style="left:789.9px;top:493.28000000000003px;width:240px;height:1px;background:#2e2e2e;"></div>
<div class="t" style="left:793.00px;top:477.00px;font-size:10.6px;color:#3450ea;transform:scaleX(0.943);transform-origin:0 0;">BatchSize</div>
<svg class="a" style="left:913px;top:477.48px;" width="14.3" height="8.6" viewBox="0 0 14.3 8.6"><path d="M2.2 0V8.6M5 0V8.6M7.8 0V8.6M10.6 0V8.6" stroke="#e6e6e6" stroke-width="1.3"/><path d="M0 6L14.3 2.4" stroke="#e6e6e6" stroke-width="1.5"/></svg>
<svg class="a" style="left:934.6px;top:477.98px;" width="4.4" height="7.5" viewBox="0 0 4.4 7.5"><path d="M0.3 0.3L4.2 3.75L0.3 7.2Z" fill="#e6e6e6"/></svg>
<div class="t" style="left:943.80px;top:477.00px;font-size:10.8px;color:#e6e6e6;letter-spacing:0.65px">1</div>
<div class="a" style="left:789.9px;top:516.76px;width:240px;height:1px;background:#2e2e2e;"></div>
<div class="t" style="left:793.00px;top:500.00px;font-size:10.6px;color:#3450ea;transform:scaleX(0.997);transform-origin:0 0;">BatchVariable</div>
<div class="t" style="left:914.80px;top:499.00px;font-size:12.5px;font-weight:bold;font-family:'Liberation Serif',serif;color:#e6e6e6;transform:scaleX(1.259);transform-origin:0 0;">T</div>
<div class="a" style="left:789.9px;top:540.24px;width:240px;height:1px;background:#2e2e2e;"></div>
<div class="t" style="left:793.00px;top:524.00px;font-size:10.6px;color:#e6e6e6;transform:scaleX(1.087);transform-origin:0 0;">Input</div>
<svg class="a" style="left:914px;top:523.44px;" width="11.8" height="9.8" viewBox="0 0 11.8 9.8"><rect x="0.8" y="1" width="10.2" height="8" rx="0.8" stroke="#e6e6e6" stroke-width="1.6" fill="none"/><path d="M0.8 1.1H11" stroke="#e6e6e6" stroke-width="2"/><path d="M0.8 5.2H11M5.9 1V9" stroke="#e6e6e6" stroke-width="1.3"/></svg>
<svg class="a" style="left:934.6px;top:524.94px;" width="4.4" height="7.5" viewBox="0 0 4.4 7.5"><path d="M0.3 0.3L4.2 3.75L0.3 7.2Z" fill="#e6e6e6"/></svg>
<div class="t" style="left:943.80px;top:524.00px;font-size:10.8px;color:#e6e6e6;letter-spacing:0.65px">A^B^Y;A^B^Z;A^B^Z;A^C^X</div>
<div class="a" style="left:789.9px;top:563.72px;width:240px;height:1px;background:#2e2e2e;"></div>
<div class="t" style="left:793.00px;top:547.00px;font-size:10.6px;color:#e6e6e6;transform:scaleX(1.072);transform-origin:0 0;">Output1</div>
<svg class="a" style="left:914px;top:546.9200000000001px;" width="11.8" height="9.8" viewBox="0 0 11.8 9.8"><rect x="0.8" y="1" width="10.2" height="8" rx="0.8" stroke="#e6e6e6" stroke-width="1.6" fill="none"/><path d="M0.8 1.1H11" stroke="#e6e6e6" stroke-width="2"/><path d="M0.8 5.2H11M5.9 1V9" stroke="#e6e6e6" stroke-width="1.3"/></svg>
<svg class="a" style="left:934.6px;top:548.4200000000001px;" width="4.4" height="7.5" viewBox="0 0 4.4 7.5"><path d="M0.3 0.3L4.2 3.75L0.3 7.2Z" fill="#e6e6e6"/></svg>
<div class="t" style="left:943.80px;top:547.00px;font-size:10.8px;color:#e6e6e6;letter-spacing:0.65px">A^B^6^2021-03-12;A^C^2</div>
<div class="a" style="left:789.9px;top:587.2px;width:240px;height:1px;background:#2e2e2e;"></div>
<div class="t" style="left:793.00px;top:571.00px;font-size:10.6px;color:#e6e6e6;transform:scaleX(1.072);transform-origin:0 0;">Output2</div>
<svg class="a" style="left:914px;top:570.4000000000001px;" width="11.8" height="9.8" viewBox="0 0 11.8 9.8"><rect x="0.8" y="1" width="10.2" height="8" rx="0.8" stroke="#e6e6e6" stroke-width="1.6" fill="none"/><path d="M0.8 1.1H11" stroke="#e6e6e6" stroke-width="2"/><path d="M0.8 5.2H11M5.9 1V9" stroke="#e6e6e6" stroke-width="1.3"/></svg>
<svg class="a" style="left:934.6px;top:571.9000000000001px;" width="4.4" height="7.5" viewBox="0 0 4.4 7.5"><path d="M0.3 0.3L4.2 3.75L0.3 7.2Z" fill="#e6e6e6"/></svg>
<div class="t" style="left:943.80px;top:571.00px;font-size:10.8px;color:#e6e6e6;letter-spacing:0.65px">A^B^1^3^2^1^6^3;A^C</div>
<div class="a" style="left:789.9px;top:610.6800000000001px;width:240px;height:1px;background:#2e2e2e;"></div>
<div class="t" style="left:793.00px;top:594.00px;font-size:10.6px;color:#e6e6e6;transform:scaleX(1.072);transform-origin:0 0;">Output3</div>
<svg class="a" style="left:914px;top:593.8800000000001px;" width="11.8" height="9.8" viewBox="0 0 11.8 9.8"><rect x="0.8" y="1" width="10.2" height="8" rx="0.8" stroke="#e6e6e6" stroke-width="1.6" fill="none"/><path d="M0.8 1.1H11" stroke="#e6e6e6" stroke-width="2"/><path d="M0.8 5.2H11M5.9 1V9" stroke="#e6e6e6" stroke-width="1.3"/></svg>
<svg class="a" style="left:934.6px;top:595.3800000000001px;" width="4.4" height="7.5" viewBox="0 0 4.4 7.5"><path d="M0.3 0.3L4.2 3.75L0.3 7.2Z" fill="#e6e6e6"/></svg>
<div class="t" style="left:943.80px;top:594.00px;font-size:10.8px;color:#e6e6e6;letter-spacing:0.65px">A^C^1^Z^1^Z^1^3;A^B</div>
<div class="a" style="left:789.9px;top:634.1600000000001px;width:240px;height:1px;background:#2e2e2e;"></div>
<div class="t" style="left:793.00px;top:618.00px;font-size:10.6px;color:#e6e6e6;transform:scaleX(1.072);transform-origin:0 0;">Output4</div>
<svg class="a" style="left:914px;top:615.3000000000001px;" width="11.8" height="9.8" viewBox="0 0 11.8 9.8"><rect x="0.8" y="1" width="10.2" height="8" rx="0.8" stroke="#e6e6e6" stroke-width="1.6" fill="none"/><path d="M0.8 1.1H11" stroke="#e6e6e6" stroke-width="2"/><path d="M0.8 5.2H11M5.9 1V9" stroke="#e6e6e6" stroke-width="1.3"/></svg>
<svg class="a" style="left:0;top:0;z-index:10" width="400" height="70" viewBox="0 0 400 70"><path d="M322 4.5C300 1.2 265 0.5 247 3.2C236 6 230 16 228.3 26C227.5 37 238 44.5 260 49.5C274 52.5 292 53.5 304 49.5C321 43.5 330.5 33 330.3 21C330 11 324 5.5 318 3.5" stroke="#f41414" stroke-width="3" fill="none" stroke-linecap="round"/></svg>
</body></html>
